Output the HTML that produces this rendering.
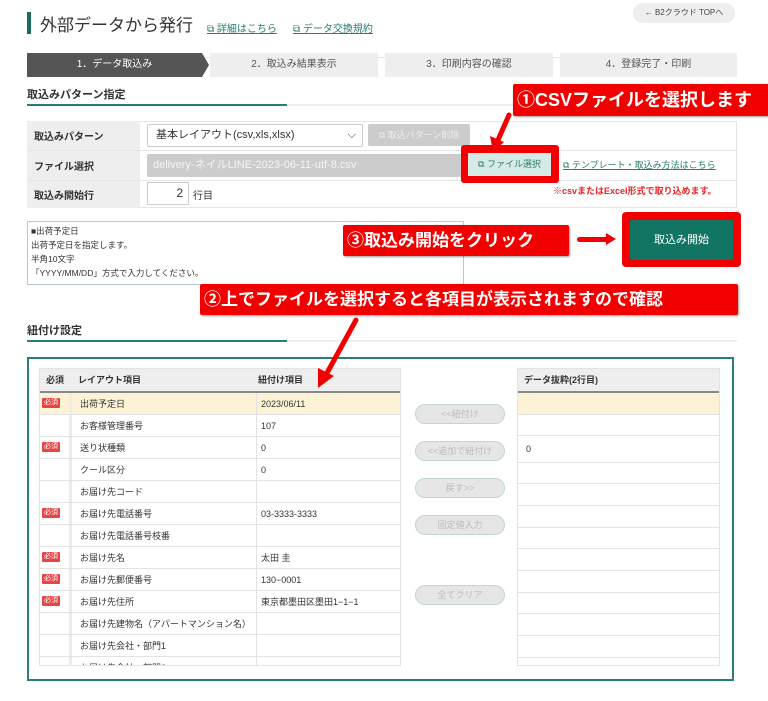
<!DOCTYPE html>
<html><head><meta charset="utf-8"><style>
*{margin:0;padding:0;box-sizing:border-box}
body{width:768px;height:701px;background:#fff;position:relative;overflow:hidden;font-family:"Liberation Sans","Noto Sans CJK JP",sans-serif;color:#333;font-size:10px}
.a{position:absolute}
.lk{color:#2a7d6c;text-decoration:underline;font-size:10px}
.step{position:absolute;top:52px;height:24px;line-height:24px;text-align:center;font-size:10px;color:#555;background:#eee}
.rl{background:#f20000;color:#fff;font-size:17px;font-weight:bold;white-space:nowrap;border-radius:2px;box-shadow:1px 1px 2px rgba(0,0,0,.4)}
.row{position:absolute;left:0;width:362px;height:22px;border-bottom:1px solid #e3e3e3;font-size:9px;line-height:22px}
.row .c1{position:absolute;left:0;width:32px;height:21px;border-right:3px solid #ececec}
.row .c2{position:absolute;left:40px}
.row .c3{position:absolute;left:216px;top:0;height:22px;border-left:1px solid #e3e3e3;padding-left:4px;width:146px}
.hs{position:absolute;left:2px;top:5px;background:#e64545;color:#fff;font-size:7px;line-height:10px;padding:0 2px;border-radius:1px}
.btn{position:absolute;left:415px;width:90px;height:20px;border-radius:10px;background:#e6e6e6;border:1px solid #bfd7d0;color:#bbb;font-size:9px;text-align:center;line-height:18px}
.rr{position:absolute;left:0;width:203px;border-bottom:1px solid #e3e3e3;font-size:9px;padding-left:8px}
</style></head><body>
<div class="a" style="left:27px;top:12px;width:4px;height:22px;background:#1a6b5a"></div>
<div class="a" style="left:40px;top:11px;font-size:17px;color:#333">外部データから発行</div>
<div class="a lk" style="left:207px;top:20px">⧉ 詳細はこちら</div>
<div class="a lk" style="left:293px;top:20px">⧉ データ交換規約</div>
<div class="a" style="left:633px;top:3px;width:102px;height:20px;border-radius:10px;background:#eee;font-size:8px;line-height:20px;text-align:center;color:#444">← B2クラウド TOPへ</div>
<div class="a" style="left:27px;top:57px;width:710px;height:1px;background:#e5e5e5"></div>

<div class="step" style="left:27px;width:175px;background:#555;color:#fff;top:53px">1．データ取込み</div>
<div class="a" style="left:202px;top:53px;width:0;height:0;border-top:12px solid transparent;border-bottom:12px solid transparent;border-left:7px solid #555"></div>
<div class="step" style="left:210px;width:168px;top:53px">2．取込み結果表示</div>
<div class="step" style="left:385px;width:168px;top:53px">3．印刷内容の確認</div>
<div class="step" style="left:560px;width:177px;top:53px">4．登録完了・印刷</div>

<div class="a" style="left:27px;top:86px;font-size:11px;font-weight:bold">取込みパターン指定</div>
<div class="a" style="left:27px;top:104px;width:710px;height:2px;background:#eee"></div>
<div class="a" style="left:27px;top:104px;width:260px;height:2px;background:#2a8070"></div>

<div class="a" style="left:27px;top:121px;width:710px;height:87px;border:1px solid #e5e5e5"></div>
<div class="a" style="left:27px;top:121px;width:113px;height:87px;background:#eee"></div>
<div class="a" style="left:27px;top:150px;width:710px;height:1px;background:#e5e5e5"></div>
<div class="a" style="left:27px;top:180px;width:710px;height:1px;background:#e5e5e5"></div>
<div class="a" style="left:34px;top:128px;font-size:10px;font-weight:bold">取込みパターン</div>
<div class="a" style="left:34px;top:158px;font-size:10px;font-weight:bold">ファイル選択</div>
<div class="a" style="left:34px;top:187px;font-size:10px;font-weight:bold">取込み開始行</div>
<div class="a" style="left:147px;top:124px;width:216px;height:23px;border:1px solid #ccc;border-radius:2px;font-size:11px;line-height:21px;padding-left:8px">基本レイアウト(csv,xls,xlsx)<span style="position:absolute;right:6px">⌵</span></div>
<div class="a" style="left:368px;top:124px;width:102px;height:22px;background:#ccc;border-radius:2px;color:#eee;font-size:9px;line-height:22px;text-align:center">⧉ 取込パターン削除</div>
<div class="a" style="left:147px;top:154px;width:316px;height:23px;background:#ccc;border-radius:2px;color:#f4f4f4;font-size:11px;line-height:23px;padding-left:6px">delivery-ネイルLINE-2023-06-11-utf-8.csv</div>
<div class="a" style="left:461px;top:145px;width:98px;height:38px;background:#f20000;border-radius:3px"></div>
<div class="a" style="left:468px;top:153px;width:83px;height:23px;background:#d6ebe5;color:#2a7d6c;font-size:9px;line-height:23px;text-align:center">⧉ ファイル選択</div>
<div class="a lk" style="left:563px;top:158px;font-size:9px">⧉ テンプレート・取込み方法はこちら</div>
<div class="a" style="left:553px;top:184px;color:#e22;font-size:9px;font-weight:bold">※csvまたはExcel形式で取り込めます。</div>
<div class="a" style="left:147px;top:182px;width:42px;height:23px;border:1px solid #ccc;font-size:12px;line-height:21px;text-align:right;padding-right:5px">2</div>
<div class="a" style="left:193px;top:187px;font-size:10px">行目</div>

<div class="a" style="left:27px;top:221px;width:437px;height:64px;border:1px solid #b8c8d8;font-size:8.5px;line-height:14px;padding:2px 3px">■出荷予定日<br>出荷予定日を指定します。<br>半角10文字<br>「YYYY/MM/DD」方式で入力してください。</div>

<div class="a rl" style="left:343px;top:225px;width:226px;height:31px;line-height:31px;padding-left:4px">③取込み開始をクリック</div>
<div class="a" style="left:577px;top:237px;width:32px;height:5px;background:#f20000;border-radius:3px"></div>
<div class="a" style="left:606px;top:233px;width:0;height:0;border-top:6px solid transparent;border-bottom:6px solid transparent;border-left:10px solid #f20000"></div>
<div class="a" style="left:622px;top:212px;width:119px;height:55px;background:#f20000;border-radius:4px"></div>
<div class="a" style="left:630px;top:220px;width:103px;height:40px;background:#127563;color:#fff;font-size:11px;line-height:40px;text-align:center">取込み開始</div>

<div class="a rl" style="left:200px;top:284px;width:538px;height:31px;line-height:31px;padding-left:4px">②上でファイルを選択すると各項目が表示されますので確認</div>
<div class="a rl" style="left:513px;top:84px;width:260px;height:32px;line-height:32px;padding-left:4px;font-size:18px">①CSVファイルを選択します</div>

<div class="a" style="left:27px;top:322px;font-size:11px;font-weight:bold">紐付け設定</div>
<div class="a" style="left:27px;top:340px;width:710px;height:2px;background:#eee"></div>
<div class="a" style="left:27px;top:340px;width:260px;height:2px;background:#2a8070"></div>

<div class="a" style="left:27px;top:357px;width:707px;height:324px;border:2px solid #2a8070"></div>
<div class="a" style="left:39px;top:368px;width:362px;height:298px;border:1px solid #e3e3e3;overflow:hidden">
 <div class="a" style="left:0;top:0;width:362px;height:24px;background:#eee;border-bottom:2px solid #888;font-size:9px;font-weight:bold;line-height:22px"><span class="a" style="left:6px">必須</span><span class="a" style="left:38px">レイアウト項目</span><span class="a" style="left:218px">紐付け項目</span></div>
 <div class="row" style="top:24px;background:#fcf3d6"><div class="c1"><span class="hs">必須</span></div><span class="c2">出荷予定日</span><span class="c3">2023/06/11</span></div>
 <div class="row" style="top:46px"><div class="c1"></div><span class="c2">お客様管理番号</span><span class="c3">107</span></div>
 <div class="row" style="top:68px"><div class="c1"><span class="hs">必須</span></div><span class="c2">送り状種類</span><span class="c3">0</span></div>
 <div class="row" style="top:90px"><div class="c1"></div><span class="c2">クール区分</span><span class="c3">0</span></div>
 <div class="row" style="top:112px"><div class="c1"></div><span class="c2">お届け先コード</span><span class="c3"></span></div>
 <div class="row" style="top:134px"><div class="c1"><span class="hs">必須</span></div><span class="c2">お届け先電話番号</span><span class="c3">03-3333-3333</span></div>
 <div class="row" style="top:156px"><div class="c1"></div><span class="c2">お届け先電話番号枝番</span><span class="c3"></span></div>
 <div class="row" style="top:178px"><div class="c1"><span class="hs">必須</span></div><span class="c2">お届け先名</span><span class="c3">太田 圭</span></div>
 <div class="row" style="top:200px"><div class="c1"><span class="hs">必須</span></div><span class="c2">お届け先郵便番号</span><span class="c3">130−0001</span></div>
 <div class="row" style="top:222px"><div class="c1"><span class="hs">必須</span></div><span class="c2">お届け先住所</span><span class="c3">東京都墨田区墨田1−1−1</span></div>
 <div class="row" style="top:244px"><div class="c1"></div><span class="c2">お届け先建物名（アパートマンション名）</span><span class="c3"></span></div>
 <div class="row" style="top:266px"><div class="c1"></div><span class="c2">お届け先会社・部門1</span><span class="c3"></span></div>
 <div class="row" style="top:288px"><div class="c1"></div><span class="c2">お届け先会社・部門2</span><span class="c3"></span></div>
</div>
<div class="btn" style="top:404px">&lt;&lt;紐付け</div>
<div class="btn" style="top:441px">&lt;&lt;追加で紐付け</div>
<div class="btn" style="top:478px">戻す&gt;&gt;</div>
<div class="btn" style="top:515px">固定値入力</div>
<div class="btn" style="top:585px">全てクリア</div>

<div class="a" style="left:517px;top:368px;width:203px;height:298px;border:1px solid #e3e3e3;overflow:hidden">
 <div class="a" style="left:0;top:0;width:203px;height:24px;background:#eee;border-bottom:2px solid #888;font-size:9px;font-weight:bold;line-height:22px;padding-left:6px">データ抜粋(2行目)</div>
 <div class="rr" style="top:24px;height:22px;background:#fcf3d6"></div>
 <div class="rr" style="top:46px;height:21px"></div>
 <div class="rr" style="top:67px;height:27px;line-height:26px">0</div>
 <div class="rr" style="top:94px;height:21px"></div>
 <div class="rr" style="top:115px;height:22px"></div>
 <div class="rr" style="top:137px;height:22px"></div>
 <div class="rr" style="top:159px;height:21px"></div>
 <div class="rr" style="top:180px;height:22px"></div>
 <div class="rr" style="top:202px;height:22px"></div>
 <div class="rr" style="top:224px;height:21px"></div>
 <div class="rr" style="top:245px;height:22px"></div>
 <div class="rr" style="top:267px;height:22px"></div>
</div>
<svg class="a" style="left:0;top:0" width="768" height="701"><g stroke="#f20000" stroke-width="5" stroke-linecap="round"><line x1="509" y1="115" x2="498" y2="140"/><line x1="356" y1="320" x2="327" y2="373"/></g><polygon points="490,136 504,142 493,152" fill="#f20000"/><polygon points="318,368 334,376 318,388" fill="#f20000"/></svg>
</body></html>
